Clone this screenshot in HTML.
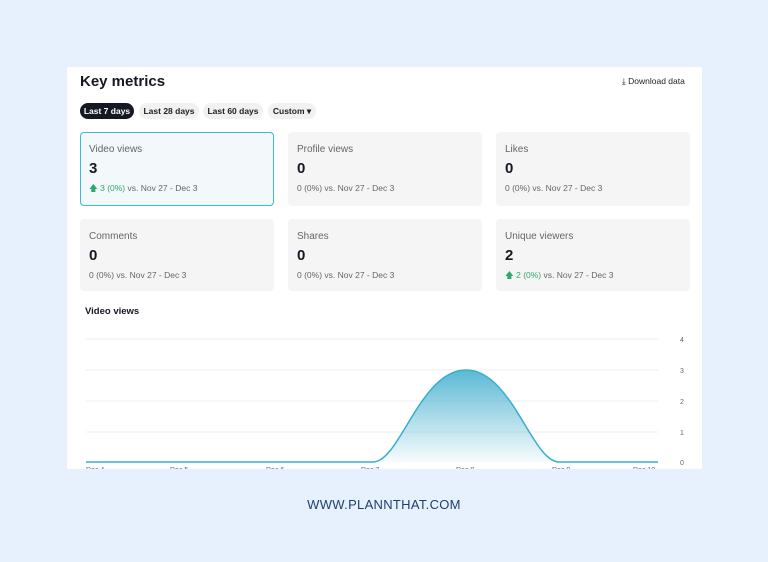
<!DOCTYPE html><html><head><style>
body{margin:0;width:768px;height:562px;background:#e6f1fd;font-family:"Liberation Sans",sans-serif;position:relative;overflow:hidden}
.card{position:absolute;left:67px;top:67px;width:635px;height:402px;background:#fff;overflow:hidden}
.a{position:absolute}
.pill{position:absolute;top:103px;height:16px;border-radius:8px;background:#f1f1f2;font-size:8.5px;font-weight:bold;color:#222;line-height:16px;text-align:center}
.m{position:absolute;width:194px;background:#f5f5f6;border-radius:4px;box-sizing:border-box;padding:12px 9px}
.m .t{font-size:10px;color:#666}
.m .v{font-size:15px;font-weight:bold;color:#161823;margin-top:5px}
.m .c{font-size:8.5px;color:#666;margin-top:6px}
.g{color:#2fa86c}
</style></head><body>
<div class="card"></div>
<div class="a" style="left:80px;top:73px;font-size:15px;font-weight:bold;color:#161823">Key metrics</div>
<div class="a" style="left:622px;top:76px;font-size:8.5px;color:#222">⤓ Download data</div>
<div class="pill" style="left:80px;width:54px;background:#161823;color:#fff">Last 7 days</div>
<div class="pill" style="left:139px;width:60px">Last 28 days</div>
<div class="pill" style="left:203px;width:60px">Last 60 days</div>
<div class="pill" style="left:268px;width:48px">Custom ▾</div>
<div class="m" style="left:80px;top:132px;height:74px;border:1.5px solid #3cb9d4;background:#f3f8fb;padding:11px 8px"><div class="t">Video views</div><div class="v">3</div><div class="c"><span class="g">🡅 3 (0%)</span> vs. Nov 27 - Dec 3</div></div>
<div class="m" style="left:288px;top:132px;height:74px"><div class="t">Profile views</div><div class="v">0</div><div class="c">0 (0%) vs. Nov 27 - Dec 3</div></div>
<div class="m" style="left:496px;top:132px;height:74px"><div class="t">Likes</div><div class="v">0</div><div class="c">0 (0%) vs. Nov 27 - Dec 3</div></div>
<div class="m" style="left:80px;top:219px;height:72px"><div class="t">Comments</div><div class="v">0</div><div class="c">0 (0%) vs. Nov 27 - Dec 3</div></div>
<div class="m" style="left:288px;top:219px;height:72px"><div class="t">Shares</div><div class="v">0</div><div class="c">0 (0%) vs. Nov 27 - Dec 3</div></div>
<div class="m" style="left:496px;top:219px;height:72px"><div class="t">Unique viewers</div><div class="v">2</div><div class="c"><span class="g">🡅 2 (0%)</span> vs. Nov 27 - Dec 3</div></div>
<div class="a" style="left:85px;top:306px;font-size:9.5px;font-weight:bold;color:#161823">Video views</div>
<svg class="a" style="left:0;top:0" width="768" height="562">
<defs><linearGradient id="gr" x1="0" y1="0" x2="0" y2="1"><stop offset="0" stop-color="#5bb9d4"/><stop offset="1" stop-color="#5bb9d4" stop-opacity="0.05"/></linearGradient></defs>
<g stroke="#ececec" stroke-width="1"><line x1="86" y1="339" x2="658" y2="339"/><line x1="86" y1="370" x2="658" y2="370"/><line x1="86" y1="401" x2="658" y2="401"/><line x1="86" y1="432" x2="658" y2="432"/></g>
<path d="M373 462 C400 462 420 370 466 370 C512 370 532 462 559 462 Z" fill="url(#gr)"/>
<path d="M86 462 L373 462 C400 462 420 370 466 370 C512 370 532 462 559 462 L658 462" fill="none" stroke="#38aecf" stroke-width="1.5"/>
<g font-size="7" fill="#666" font-family="Liberation Sans"><text x="680" y="342">4</text><text x="680" y="373">3</text><text x="680" y="404">2</text><text x="680" y="435">1</text><text x="680" y="465">0</text>
<text x="86" y="472">Dec 4</text><text x="170" y="472">Dec 5</text><text x="266" y="472">Dec 6</text><text x="361" y="472">Dec 7</text><text x="456" y="472">Dec 8</text><text x="552" y="472">Dec 9</text><text x="633" y="472">Dec 10</text></g>
<rect x="0" y="469" width="768" height="93" fill="#e6f1fd"/>
</svg>
<div class="a" style="left:0;width:768px;top:497px;text-align:center;font-size:13px;color:#1d3f6e;letter-spacing:0.3px">WWW.PLANNTHAT.COM</div>
</body></html>
